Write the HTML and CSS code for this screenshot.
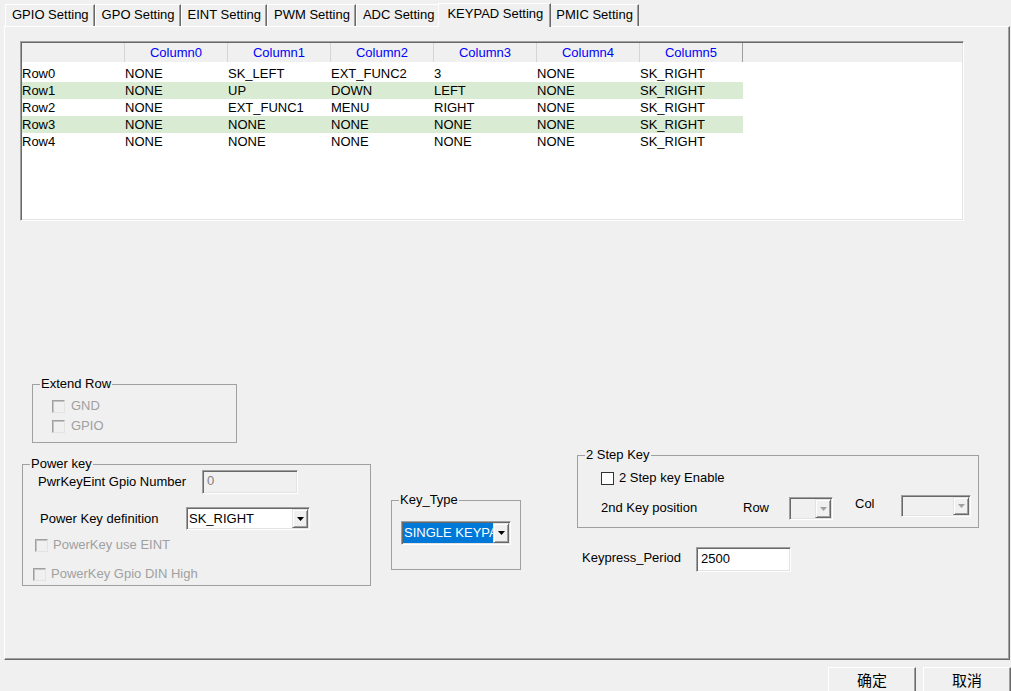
FILE: index.html
```html
<!DOCTYPE html>
<html>
<head>
<meta charset="utf-8">
<link rel="stylesheet" href="styles.css">
</head>
<body>
<div class="tabs">
  <div class="tab">GPIO Setting</div>
  <div class="tab">GPO Setting</div>
  <div class="tab">EINT Setting</div>
  <div class="tab">PWM Setting</div>
  <div class="tab">ADC Setting</div>
  <div class="tab active">KEYPAD Setting</div>
  <div class="tab">PMIC Setting</div>
</div>
<div class="panel">
  <div class="frame">
    <div class="ghead">
      <div class="hc"></div>
      <div class="hc">Column0</div>
      <div class="hc">Column1</div>
      <div class="hc">Column2</div>
      <div class="hc">Column3</div>
      <div class="hc">Column4</div>
      <div class="hc last">Column5</div>
    </div>
    <div class="grows">
      <div class="grow"><span>Row0</span><span>NONE</span><span>SK_LEFT</span><span>EXT_FUNC2</span><span>3</span><span>NONE</span><span>SK_RIGHT</span></div>
      <div class="grow alt"><span>Row1</span><span>NONE</span><span>UP</span><span>DOWN</span><span>LEFT</span><span>NONE</span><span>SK_RIGHT</span></div>
      <div class="grow"><span>Row2</span><span>NONE</span><span>EXT_FUNC1</span><span>MENU</span><span>RIGHT</span><span>NONE</span><span>SK_RIGHT</span></div>
      <div class="grow alt"><span>Row3</span><span>NONE</span><span>NONE</span><span>NONE</span><span>NONE</span><span>NONE</span><span>SK_RIGHT</span></div>
      <div class="grow"><span>Row4</span><span>NONE</span><span>NONE</span><span>NONE</span><span>NONE</span><span>NONE</span><span>SK_RIGHT</span></div>
    </div>
  </div>

  <div class="lower">
    <div class="col-left">
      <fieldset class="gb extend">
        <legend>Extend Row</legend>
        <div class="extend-body">
          <div class="cbrow dis"><span class="cb"></span><span>GND</span></div>
          <div class="cbrow dis"><span class="cb"></span><span>GPIO</span></div>
        </div>
      </fieldset>
      <fieldset class="gb power">
        <legend>Power key</legend>
        <div class="power-body">
          <div class="prow r1"><span class="plabel1">PwrKeyEint Gpio Number</span><div class="edit dis gpio">0</div></div>
          <div class="prow r2"><span class="plabel2">Power Key definition</span>
            <div class="sel pkdef"><span class="val">SK_RIGHT</span><span class="dd"><svg width="7" height="4" viewBox="0 0 7 4"><polygon points="0,0 7,0 3.5,4" fill="#000"/></svg></span></div>
          </div>
          <div class="cbrow dis r3"><span class="cb"></span><span>PowerKey use EINT</span></div>
          <div class="cbrow dis r4"><span class="cb"></span><span>PowerKey Gpio DIN High</span></div>
        </div>
      </fieldset>
    </div>

    <fieldset class="gb keytype">
      <legend>Key_Type</legend>
      <div class="kt-body">
        <div class="sel ktsel"><span class="val"><span class="hl">SINGLE KEYPAD</span></span><span class="dd"><svg width="7" height="4" viewBox="0 0 7 4"><polygon points="0,0 7,0 3.5,4" fill="#000"/></svg></span></div>
      </div>
    </fieldset>

    <div class="col-right">
      <fieldset class="gb step">
        <legend>2 Step Key</legend>
        <div class="step-body">
          <div class="cbrow en"><span class="cb"></span><span>2 Step key Enable</span></div>
          <div class="srow">
            <span class="s-lab1">2nd Key position</span>
            <span class="s-lab2">Row</span>
            <div class="sel dissel rowsel"><span class="val"></span><span class="dd"><svg width="7" height="4" viewBox="0 0 7 4"><polygon points="0,0 7,0 3.5,4" fill="#a0a0a0"/></svg></span></div>
            <span class="s-lab3">Col</span>
            <div class="sel dissel colsel"><span class="val"></span><span class="dd"><svg width="7" height="4" viewBox="0 0 7 4"><polygon points="0,0 7,0 3.5,4" fill="#a0a0a0"/></svg></span></div>
          </div>
        </div>
      </fieldset>
      <div class="kprow"><span class="kplab">Keypress_Period</span><div class="edit kpin">2500</div></div>
    </div>
  </div>
</div>
<div class="buttons">
  <div class="btn">确定</div>
  <div class="btn">取消</div>
</div>
</body>
</html>
```

FILE: styles.css
```css
body {
  margin: 0;
  width: 1011px;
  height: 691px;
  overflow: hidden;
  background: #f0f0f0;
  font: 13px/16px "Liberation Sans", Arial, sans-serif;
  color: #000;
}

/* Tabs */
.tabs {
  display: flex;
  align-items: flex-end;
  height: 26px;
  padding-left: 5px;
  box-sizing: border-box;
}
.tab {
  height: 22px;
  box-sizing: border-box;
  padding: 0 5px 0 6px;
  border-top: 1px solid #fff;
  border-left: 1px solid #fff;
  border-right: 1px solid #696969;
  box-shadow: inset -1px 0 #a0a0a0;
  line-height: 20px;
  white-space: nowrap;
}
.tab.active {
  height: 24px;
  margin: 0 -2px -1px;
  padding: 0 7px 0 8px;
  position: relative;
  z-index: 1;
  background: #f0f0f0;
  line-height: 19px;
}

/* Panel */
.panel {
  margin-left: 4px;
  width: 1006px;
  height: 634px;
  box-sizing: border-box;
  border: 1px solid;
  border-color: #fff #696969 #696969 #fff;
  box-shadow: inset -1px -1px #a0a0a0;
  padding: 14px 0 0 15px;
}

/* Grid */
.frame {
  width: 944px;
  height: 180px;
  box-sizing: border-box;
  border: 1px solid;
  border-color: #a0a0a0 #fff #fff #a0a0a0;
  box-shadow: inset 1px 1px #696969, inset -1px -1px #e3e3e3;
  padding: 1px;
  background: #fff;
}
.ghead {
  display: flex;
  height: 19px;
  background: #f0f0f0;
}
.hc {
  flex: none;
  width: 103px;
  box-sizing: border-box;
  border-right: 1px solid #d5d5d5;
  text-align: center;
  color: #0000ff;
  line-height: 19px;
}
.hc.last { border-right-color: #a0a0a0; }
.grows { margin-top: 3px; }
.grow {
  display: flex;
  width: 721px;
  height: 17px;
  line-height: 17px;
}
.grow.alt { background: #d9ebd3; }
.grow > span {
  flex: none;
  width: 103px;
  white-space: nowrap;
}

/* Lower area */
.lower {
  display: flex;
  align-items: flex-start;
  margin-top: 155px;
  margin-left: 2px;
}
.gb {
  margin: 0;
  padding: 0;
  min-width: 0;
  box-sizing: border-box;
  border: 1px solid #a0a0a0;
}
.gb legend {
  padding: 0 1px;
  margin-left: 7px;
  line-height: 16px;
}

.col-left { width: 349px; }
.extend {
  margin-left: 10px;
  width: 205px;
  height: 67px;
}
.extend-body { padding: 4px 0 0 19px; }

.cbrow {
  display: flex;
  align-items: center;
  gap: 6px;
  height: 20px;
}
.cb {
  flex: none;
  width: 13px;
  height: 13px;
  box-sizing: border-box;
  border: 1px solid;
}
.cbrow.dis { color: #a0a0a0; }
.cbrow.dis .cb {
  border-color: #a0a0a0 #e3e3e3 #e3e3e3 #a0a0a0;
  box-shadow: inset 1px 1px #c4c4c4;
  background: #f0f0f0;
}
.cbrow.en .cb {
  border-color: #333;
  background: #fff;
}

.power {
  margin-top: 13px;
  width: 349px;
  height: 130px;
}
.power-body { padding-left: 15px; }
.prow {
  display: flex;
  align-items: center;
}
.prow.r1 { margin-top: -2px; height: 24px; }
.prow.r2 { margin-top: 13px; height: 23px; padding-left: 2px; }
.plabel1 { width: 164px; }
.plabel2 { width: 146px; }
.cbrow.r3 { margin-top: 5px; margin-left: -3px; gap: 5px; }
.cbrow.r4 { margin-top: 9px; margin-left: -5px; gap: 5px; }

.edit {
  box-sizing: border-box;
  border: 1px solid;
  border-color: #a0a0a0 #fff #fff #a0a0a0;
  box-shadow: inset 1px 1px #696969, inset -1px -1px #e3e3e3;
  background: #fff;
  padding: 0 4px;
}
.edit.dis {
  background: #f0f0f0;
  color: #808080;
}
.gpio {
  width: 96px;
  height: 24px;
  line-height: 15px;
  padding-top: 2px;
}

.sel {
  display: flex;
  box-sizing: border-box;
  border: 1px solid;
  border-color: #a0a0a0 #fff #fff #a0a0a0;
  box-shadow: inset 1px 1px #696969, inset -1px -1px #e3e3e3;
  background: #fff;
  padding: 1px;
}
.sel .val {
  flex: 1;
  min-width: 0;
  overflow: hidden;
  white-space: nowrap;
  padding-left: 1px;
}
.sel .dd {
  flex: none;
  width: 16px;
  box-sizing: border-box;
  border: 1px solid;
  border-color: #e3e3e3 #696969 #696969 #e3e3e3;
  box-shadow: inset 1px 1px #fff, inset -1px -1px #a0a0a0;
  background: #f0f0f0;
  display: flex;
  align-items: center;
  justify-content: center;
}
.sel .dd svg { display: block; }
.pkdef {
  width: 124px;
  height: 23px;
  line-height: 19px;
}
.keytype {
  margin-top: 116px;
  margin-left: 20px;
  width: 130px;
  height: 78px;
}
.kt-body { padding: 13px 0 0 9px; }
.ktsel {
  width: 110px;
  height: 24px;
  line-height: 20px;
}
.ktsel .val { padding-left: 0; }
.hl {
  display: block;
  background: #0078d7;
  color: #fff;
  padding-left: 1px;
}

.col-right {
  margin-top: 71px;
  margin-left: 56px;
}
.step {
  width: 402px;
  height: 81px;
}
.step-body { padding: 5px 0 0 23px; }
.step-body .cbrow { gap: 5px; }
.srow {
  display: flex;
  align-items: flex-start;
  margin-top: 7px;
  height: 25px;
}
.s-lab1 { width: 142px; margin-top: 5px; }
.s-lab2 { width: 46px; margin-top: 5px; }
.s-lab3 { width: 46px; margin-top: 1px; margin-left: 22px; }
.dissel { background: #f0f0f0; }
.rowsel { width: 44px; height: 23px; margin-top: 2px; }
.colsel { width: 70px; height: 22px; }

.kprow {
  display: flex;
  align-items: center;
  margin-top: 19px;
  padding-left: 5px;
}
.kplab { width: 114px; margin-top: -3px; }
.kpin {
  width: 95px;
  height: 25px;
  line-height: 21px;
}

/* Buttons */
.buttons {
  display: flex;
  justify-content: flex-end;
  gap: 7px;
  margin-top: 7px;
}
.btn {
  width: 88px;
  height: 26px;
  box-sizing: border-box;
  border: 1px solid;
  border-color: #fff #696969 #696969 #fff;
  box-shadow: inset -1px -1px #a0a0a0;
  display: flex;
  align-items: center;
  justify-content: center;
  font: 15px/1 "Noto Sans CJK SC", sans-serif;
  padding-bottom: 2px;
}
```
